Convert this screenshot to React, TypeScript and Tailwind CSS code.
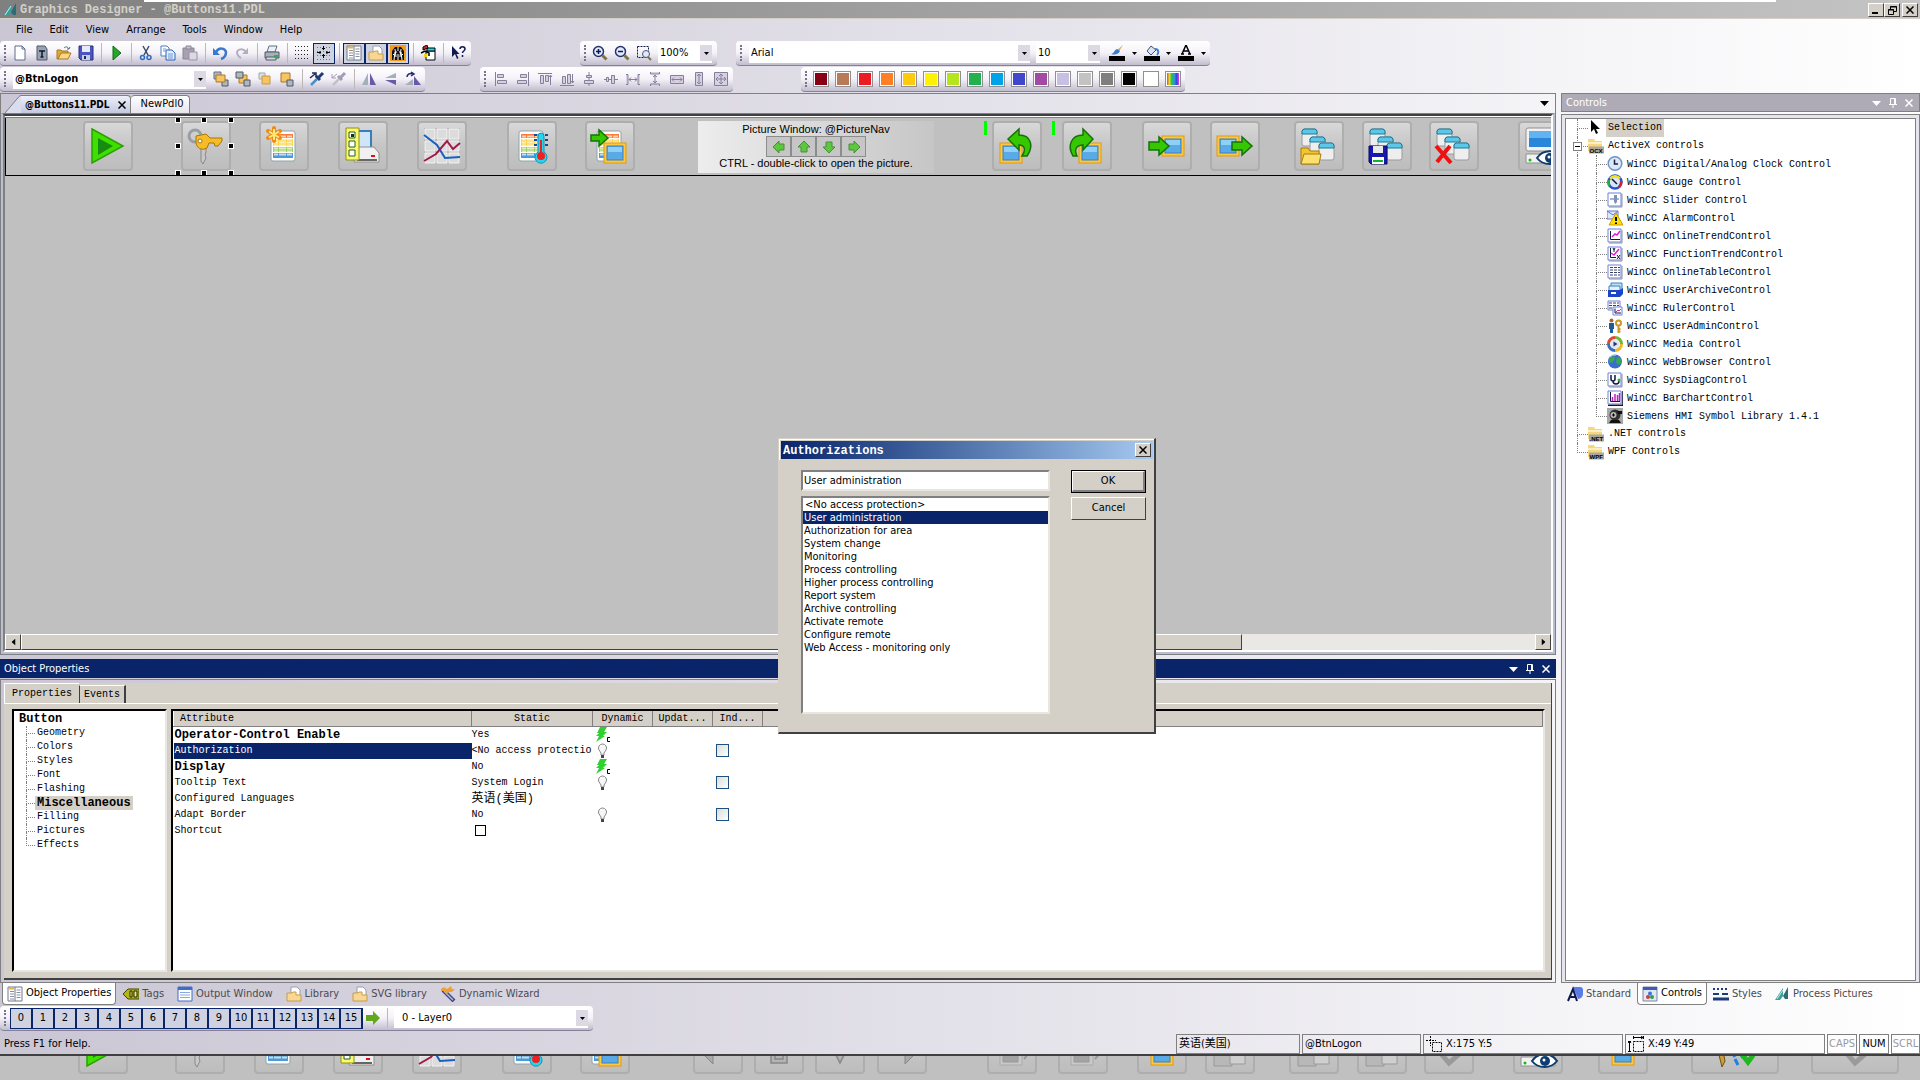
import React from 'react';

const UI = "font-['DejaVu_Sans_Condensed','Noto_Sans','Noto_Sans_CJK_SC',sans-serif]";
const MONO = "font-['Liberation_Mono','Noto_Sans_CJK_SC',monospace]";
const RAISED = 'border border-t-white border-l-white border-r-[#404040] border-b-[#404040] bg-[#d4d0c8]';
const SUNKEN = 'border-2 border-t-[#808080] border-l-[#808080] border-r-[#e8e6e0] border-b-[#e8e6e0] bg-white';

/* ---------- small 16px icons ---------- */

const folder = <path d="M1 4h5l1 2h8v8H1z" fill="#f0c25c" stroke="#b08030" />;
const lens = (
  <>
    <circle cx="6.5" cy="6.5" r="5" fill="#dfe9fb" stroke="#26306a" strokeWidth="1.5" />
    <path d="M10.500 10.500l4 4" stroke="#7c7440" strokeWidth="3" />
  </>
);
const frame = (
  <>
    <path d="M1 1h13v13H1z" fill="#fff" stroke="#6a83d8" />
    <path d="M2 15h13V2" fill="none" stroke="#8a8fa8" />
  </>
);
const docFolder = (
  <>
    <path d="M5 1h6l3 3v7H5z" fill="#fff" stroke="#9aa0b0" />
    <path d="M1 7h5l1-1h3v3h5v6H1z" fill="#f8d792" stroke="#c79c4c" />
  </>
);
const listDoc = (
  <>
    <path d="M1 1h14v14H1z" fill="#fff" stroke="#707890" />
    <path d="M2 2.500h5" stroke="#f0b030" strokeWidth="2" />
    <path d="M3 5.500h4M3 8h4M3 10.500h4M3 13h4M9.500 4h4M9.500 6.500h4M9.500 9h4M9.500 11.500h4" stroke="#8a8f9c" />
    <path d="M8 1v14" stroke="#707890" />
  </>
);
const logo = (
  <>
    <path d="M1 14L9 2v8l-3 4z" fill="#3e9c9a" />
    <path d="M9 10l5-9v12h-3z" fill="#2b6c78" />
    <path d="M3 13L9 4" stroke="#c8f0ee" />
  </>
);
const typeFolder = (label: string) => (
  <>
    <path d="M0 1h6l1 2h7v10H0z" fill="#f6d67e" />
    <path d="M0 4h14v2H0z" fill="#fdf0c0" />
    <path d="M1 8.500h15v7H1z" fill="#a8a8a0" />
    <text x="1.500" y="14.500" fontSize="6" fontWeight="700" fontFamily="Liberation Sans, sans-serif">{label}</text>
  </>
);

const ICONS: Record<string, React.ReactNode> = {
  logo,
  folder,
  docFolder,
  listDoc,
  newDoc: <path d="M3 1h7l3 3v11H3zM10 1v3h3" fill="#fff" stroke="#5c6c8c" />,
  newT: (
    <>
      <path d="M3 1h8l2 3v11H3z" fill="#9aa2b4" stroke="#4c5870" />
      <path d="M5 6h6M8 6v6M6.500 12h3" stroke="#10182c" strokeWidth="1.500" />
    </>
  ),
  open: (
    <>
      <path d="M1 5h4l1 1h6v3H5l-3 5H1z" fill="#e0a83c" stroke="#a87820" />
      <path d="M5 8h10l-3 6H2z" fill="#fad888" stroke="#a87820" />
      <path d="M8 3c2-2 4-1 5 1l1-2M13 4l-2 0" fill="none" stroke="#4a6a8a" />
    </>
  ),
  save: (
    <>
      <path d="M1 1h14v14H3l-2-2z" fill="#4a55c0" stroke="#283080" />
      <path d="M4 1h8v6H4z" fill="#e6ebfa" />
      <path d="M4 10h8v5H4z" fill="#c8cede" />
      <path d="M6 11h2v3H6z" fill="#20286a" />
    </>
  ),
  play: <path d="M5 1l8 7-8 7z" fill="#28a428" stroke="#0e6c14" />,
  cut: (
    <>
      <path d="M5 1l5 9M11 1L6 10" stroke="#3c4a68" strokeWidth="1.500" />
      <circle cx="4.500" cy="12.500" r="2" fill="none" stroke="#2e6cc4" strokeWidth="1.500" />
      <circle cx="11" cy="12.500" r="2" fill="none" stroke="#2e6cc4" strokeWidth="1.500" />
    </>
  ),
  copy: (
    <>
      <path d="M1 1h6l2 2v8H1z" fill="#fff" stroke="#4c7cc4" />
      <path d="M6 5h6l3 3v7H6z" fill="#e4eefc" stroke="#2e62b4" />
      <path d="M3 4h3M3 6h3M8 9h5M8 11h5M8 13h5" stroke="#6c98d8" />
    </>
  ),
  paste: (
    <>
      <path d="M1 3h11v11H1z" fill="#a8a0b0" stroke="#8c8498" />
      <path d="M4 1h5v3H4z" fill="#c8c2d0" stroke="#8c8498" />
      <path d="M7 7h8v8H7z" fill="#dcd8e4" stroke="#9890a4" />
    </>
  ),
  undo: (
    <>
      <path d="M1 3v7h7z" fill="#3a78d0" />
      <path d="M4 7c3-5 9-4 10 0 0 3-2 6-5 7" fill="none" stroke="#3a78d0" strokeWidth="2.500" />
    </>
  ),
  redo: (
    <>
      <path d="M14 3v6H8z" fill="#b4aec0" />
      <path d="M12 7c-3-4-8-3-9 0 0 3 2 5 4 6" fill="none" stroke="#b4aec0" strokeWidth="2" />
    </>
  ),
  print: (
    <>
      <path d="M5 1h8l-2 6H3z" fill="#e8f0fa" stroke="#607080" />
      <path d="M1 7h14v6H1z" fill="#a8b0bc" stroke="#505868" />
      <path d="M2 12h10v3H2z" fill="#d4d8e0" stroke="#505868" />
      <path d="M10 10h4v3h-4z" fill="#30b040" />
    </>
  ),
  grid: <path d="M1 1.500h15M1 5.500h15M1 9.500h15M1 13.500h15" stroke="#222" strokeDasharray="1 2" />,
  snap: (
    <>
      <path d="M1 2.500h15M1 6.500h15M1 10.500h15M1 14.500h15" stroke="#777" strokeDasharray="1 2" />
      <path d="M7.500 1v4M7.500 9v4M1 7.500h4M10 7.500h4M6 3.500h3M6 10.500h3M4 6v3M11 6v3" stroke="#000" />
    </>
  ),
  lib: (
    <>
      <path d="M0 0h16v16H0z" fill="#f49a1c" />
      <path d="M2 15V6l3-4h6l3 4v9z" fill="#111" />
      <path d="M4 15l1-8M6 12L5 4M8 15V9M8 6V2M10 12l1-8M12 15l-1-8M3 9l2 2M13 9l-2 2M6 7h1M9 7h1" stroke="#fff" />
    </>
  ),
  wizardBox: (
    <>
      <path d="M6 6h9v9H6z" fill="#fff" stroke="#000" />
      <path d="M7 3h8v3H7z" fill="#18d8e8" stroke="#000" />
      <path d="M3 2l4-2 1 3-5 2z" fill="#e02020" stroke="#000" />
      <path d="M1 8l4-2 4 2v3" stroke="#000" strokeWidth="1.500" fill="none" />
      <path d="M4 9h4l-1 3H4z" fill="#f0d020" />
    </>
  ),
  help: (
    <>
      <path d="M2 1v11l3-3 2 5 1.500-1-2-4h3z" fill="#101a50" />
      <path d="M10 4c0-3 5-3 5 0 0 2-2.500 2-2.500 4M12.500 10v2" stroke="#101a50" strokeWidth="1.500" fill="none" />
    </>
  ),
  front: (
    <>
      <path d="M1 1h7v7H1z" fill="#aeb8c0" stroke="#68707c" />
      <path d="M9 9h6v6H9z" fill="#aeb8c0" stroke="#505864" />
      <path d="M3 4h9v7H3z" fill="#f6c460" stroke="#a87828" />
    </>
  ),
  back: (
    <>
      <path d="M4 4h8v8H4z" fill="#f6c460" stroke="#a87828" />
      <path d="M1 1h7v6H1z" fill="#aeb8c0" stroke="#505864" />
      <path d="M9 9h6v6H9z" fill="#aeb8c0" stroke="#505864" />
    </>
  ),
  forward: (
    <>
      <path d="M2 2h6v6H2z" fill="#dce0e4" stroke="#a0a6b0" />
      <path d="M5 5h8v8H5z" fill="#f6c460" stroke="#c89848" />
    </>
  ),
  backward: (
    <>
      <path d="M2 2h9v9H2z" fill="#f6c460" stroke="#a87828" />
      <path d="M8 9h6v6H8z" fill="#aeb8c0" stroke="#505864" />
    </>
  ),
  dropper: (
    <>
      <path d="M8 8l-6 6" stroke="#4a90c8" strokeWidth="2.500" />
      <path d="M7 5l4 4M9 7l5-5" stroke="#1c3c78" strokeWidth="3" />
      <path d="M1 7l5-4M3 2h4v4" stroke="#202858" strokeWidth="1.500" fill="none" />
    </>
  ),
  dropperOff: (
    <>
      <path d="M8 8l-6 6" stroke="#c4c0d0" strokeWidth="2.500" />
      <path d="M7 5l4 4M9 7l5-5" stroke="#a49cb4" strokeWidth="3" />
      <path d="M1 3v4h4M1 7l5-4" stroke="#a49cb4" fill="none" />
    </>
  ),
  flipH: (
    <>
      <path d="M7 2v12H1z" fill="#a4b0b8" />
      <path d="M9 2v12h6z" fill="#6a58a8" />
    </>
  ),
  flipV: (
    <>
      <path d="M13 7V2L2 7z" fill="#a4b0b8" />
      <path d="M13 9v5L2 9z" fill="#6a58a8" />
    </>
  ),
  rotate: (
    <>
      <path d="M8 8v6H0z" fill="#a4b0b8" />
      <path d="M9 5v9h7z" fill="#6a58a8" />
      <path d="M2 6c0-3 3-4 6-3M6 1l3 2-3 2" fill="none" stroke="#202c70" strokeWidth="1.500" />
    </>
  ),
  zoomIn: <>{lens}<path d="M4 6.500h5M6.500 4v5" stroke="#10184c" strokeWidth="1.500" /></>,
  zoomOut: <>{lens}<path d="M4 6.500h5" stroke="#10184c" strokeWidth="1.500" /></>,
  zoomArea: (
    <>
      <path d="M1.500 1.500h11v11h-11z" fill="none" stroke="#10184c" strokeDasharray="2 1" />
      <circle cx="10" cy="9" r="3.500" fill="#dfe9fb" stroke="#50587a" />
      <path d="M12 12l3 3" stroke="#7c7440" strokeWidth="2" />
    </>
  ),
  pen: (
    <>
      <path d="M14 0L7 6l2 2z" fill="#e8a840" />
      <path d="M8 4l3 2c-2 4-6 4-9 3 3 0 3-4 6-5z" fill="#3a7cd0" />
      <path d="M0 11h16v5H0z" />
    </>
  ),
  fill: (
    <>
      <path d="M7 1l5 4-5 5-4-4z" fill="#dce4f0" stroke="#3c5478" />
      <path d="M11 4c4 0 4 4 2 6" stroke="#3a7cd0" strokeWidth="2" fill="none" />
      <path d="M0 11h16v5H0z" />
    </>
  ),
  fontColor: (
    <>
      <path d="M4 9l4-9 4 9M5.500 6h5M3 9h3M10 9h3" stroke="#000" strokeWidth="1.500" fill="none" />
      <path d="M0 11h16v5H0z" />
    </>
  ),
  alLeft: <path d="M2.500 1v14M4.500 3.500h6v3h-6zM4.500 9.500h9v3h-9z" />,
  alRight: <path d="M13.500 1v14M5.500 3.500h6v3h-6zM2.500 9.500h9v3h-9z" />,
  alTop: <path d="M1 2.500h14M3.500 4.500h3v8h-3zM8.500 4.500h3v6h-3zM13.500 5v9M12 6l1.500-2L15 6" />,
  alBottom: <path d="M1 14.500h14M3.500 5.500h3v7h-3zM8.500 3.500h3v9h-3zM13.500 3v9M12 10l1.500 2 1.500-2" />,
  alCenterH: <path d="M8 1v3M5.500 4.500h5v2h-5zM8 7v3M3.500 9.500h9v3h-9zM8 13v2" />,
  alCenterV: <path d="M1 8.500h2M3.500 6.500h2v4h-2zM6 8.500h2M8.500 4.500h3v8h-3zM12 8.500h3" />,
  spaceH: <path d="M1 3.500h2v10H1M15 3.500h-2v10h2M4 8.500h8M6 6.500l-2 2 2 2M10 6.500l2 2-2 2" />,
  spaceV: <path d="M3.500 1v2h9V1M3.500 15v-2h9v2M8 4v8M6 6l2-2 2 2M6 10l2 2 2-2" />,
  sameW: <path d="M1.500 4.500h13v8h-13zM3 8.500h10M5 6.500l-2 2 2 2M11 6.500l2 2-2 2" />,
  sameH: <path d="M4.500 1.500h7v13h-7zM8 3v10M6 5l2-2 2 2M6 11l2 2 2-2" />,
  sameWH: <path d="M1.500 1.500h13v13h-13zM8 3v10M3 8h10M6 5l2-2 2 2M6 11l2 2 2-2M5 6L3 8l2 2M11 6l2 2-2 2" />,
  arrowGo: <path d="M1 5h7V1l7 7-7 7v-4H1z" fill="#62a81c" />,
  tags: (
    <>
      <path d="M0 8l5-5h11v10H5z" fill="#b4b814" stroke="#404400" />
      <path d="M7 5h2v6H7zM11 5h3v6h-3z" fill="#f0f080" stroke="#202000" />
    </>
  ),
  output: (
    <>
      <path d="M1 1h14v14H1z" fill="#fff" stroke="#3e6cc8" />
      <path d="M1 2.500h14" stroke="#3e6cc8" strokeWidth="3" />
      <path d="M3 6.500h10M3 9h10M3 11.500h10" stroke="#8aa8e0" />
    </>
  ),
  wand: (
    <>
      <path d="M3 4l11 11" stroke="#404a80" strokeWidth="4" />
      <path d="M4 5l9 9" stroke="#aeb6e0" strokeWidth="1.500" />
      <path d="M1 3l3-2 3 2 4-3 1 3 3 0-3 3-3 0-3 2-1-3-4 0z" fill="#f0a030" />
    </>
  ),
  std: (
    <>
      <path d="M6 1h7a3 3 0 013 3v4a5 5 0 01-5 5z" fill="#5a7ce8" />
      <path d="M1 15l5-12 4 12M3 11h6" stroke="#10184c" strokeWidth="2" fill="none" />
    </>
  ),
  ctrlTab: (
    <>
      <path d="M1 1h14v14H1z" fill="#e0e6f2" stroke="#7888a8" />
      <path d="M1 2.500h14" stroke="#3c5cb8" strokeWidth="3" />
      <circle cx="8" cy="7.500" r="2" fill="#4070e0" />
      <circle cx="6" cy="11" r="2" fill="#d03a3a" />
      <circle cx="10" cy="11" r="2" fill="#30a040" />
    </>
  ),
  styles: (
    <>
      <path d="M0 3h16" stroke="#1c3c78" strokeWidth="2" strokeDasharray="2 2" />
      <path d="M0 8h16" stroke="#1c3c78" strokeWidth="2" strokeDasharray="6 3" />
      <path d="M0 13h16" stroke="#1c3c78" strokeWidth="3" />
    </>
  ),
  pos: <path d="M4.500 0v10M0 4.500h10M6.500 6.500h9v9h-9z" fill="none" stroke="#000" strokeDasharray="2 1" />,
  size: (
    <>
      <path d="M5.500 5.500h10v10h-10z" fill="none" stroke="#000" strokeDasharray="2 1" />
      <path d="M5 1.500h10M1.500 5v10M0 15.500h3M0 5.500h3M5.500 0v3M15.500 0v3M13 0l2 1.500L13 3M0 7l1.500-2L3 7" fill="none" stroke="#000" />
    </>
  ),
  cursor: <path d="M3 0v12l3-3 2 5 2-1-2-4h4z" fill="#000" />,
  ocx: typeFolder('OCX'),
  net: typeFolder('.NET'),
  wpf: typeFolder('WPF'),
  clock: (
    <>
      <circle cx="8" cy="7.500" r="6.800" fill="#dce8f8" stroke="#6f94c8" strokeWidth="1.500" />
      <path d="M7.500 3.500V8H11" fill="none" stroke="#16233c" strokeWidth="1.500" />
    </>
  ),
  gauge: (
    <>
      <circle cx="8" cy="8" r="6.500" fill="#d8e4fa" stroke="#2c50d0" strokeWidth="2.500" />
      <path d="M2.500 12A6.500 6.500 0 012 6" stroke="#20b040" strokeWidth="2.500" fill="none" />
      <path d="M3 4.500a6.500 6.500 0 0110 0" stroke="#f0e020" strokeWidth="2.500" fill="none" />
      <path d="M14 7a6.500 6.500 0 01-2 6" stroke="#e02020" strokeWidth="2.500" fill="none" />
      <path d="M5 5l5 5" stroke="#101840" strokeWidth="1.500" />
    </>
  ),
  slider: <>{frame}<path d="M3 6h9v2H3z" fill="#a0b4e0" /><path d="M7 3h3v7l-1.500 2L7 10z" fill="#8090b8" /></>,
  alarm: (
    <>
      <path d="M0 1h11v8H0z" fill="#dfe7fb" stroke="#5c78d0" />
      <path d="M0 1l6 4 5-4" fill="none" stroke="#5c78d0" />
      <path d="M9 3l7 12H2z" fill="#ffe000" stroke="#c8a000" />
      <path d="M9 7v4M9 12.500v1.500" stroke="#000" strokeWidth="2" />
    </>
  ),
  trend: <>{frame}<path d="M3.500 3v8.500H13" stroke="#101840" fill="none" /><path d="M5 9l3-3 2 1 3-4" stroke="#e020d0" strokeWidth="1.500" fill="none" /></>,
  ftrend: <>{frame}<path d="M3.500 2v9.500H9" stroke="#101840" fill="none" /><path d="M4 7l3 2 5-6" stroke="#e020d0" strokeWidth="1.500" fill="none" /><path d="M6 2l1 2 1-2M7 4v2M10 9l3 4M13 9l-3 4" stroke="#101840" fill="none" /></>,
  table: <>{frame}<path d="M3 3.500h10M3 6h10M3 8.500h10M3 11h10" stroke="#39426c" strokeDasharray="3 1" /></>,
  archive: (
    <>
      <path d="M4 1h11v7H4z" fill="#bfe2f6" stroke="#3a80b8" />
      <path d="M2 4h11v5H2z" fill="#dff2fc" stroke="#3a80b8" />
      <path d="M1 8h12l3-2v6l-3 3H1z" fill="#1c44c8" />
      <path d="M4 10h5v2H4z" fill="#fff" />
    </>
  ),
  ruler: (
    <>
      <path d="M1 1h12v9H1z" fill="#fff" stroke="#6a83d8" />
      <path d="M2 3h10M2 5.500h10M2 8h10" stroke="#39426c" strokeDasharray="3 1" />
      <path d="M6 7h9v8H6z" fill="#fff" stroke="#6a83d8" />
      <path d="M8 8.500V13h6" stroke="#101840" fill="none" />
      <path d="M9 12l2-2 1 1 2-2" stroke="#e020d0" fill="none" />
    </>
  ),
  userAdmin: (
    <>
      <circle cx="4.500" cy="2.500" r="2" fill="#a86838" />
      <path d="M2 5h5v6H6v4H3v-4H2z" fill="#1c5c9c" />
      <circle cx="11.500" cy="5" r="2.500" fill="none" stroke="#c89828" strokeWidth="2" />
      <path d="M11.500 7v8M11.500 11h2M11.500 13.500h2" stroke="#c89828" strokeWidth="2" />
    </>
  ),
  media: (
    <>
      <path d="M8 1.500A6.500 6.500 0 001.500 8" stroke="#e04830" strokeWidth="3" fill="none" />
      <path d="M8 1.500A6.500 6.500 0 0114.500 8" stroke="#70b838" strokeWidth="3" fill="none" />
      <path d="M14.500 8A6.500 6.500 0 018 14.500" stroke="#f0b820" strokeWidth="3" fill="none" />
      <path d="M1.500 8A6.500 6.500 0 008 14.500" stroke="#3870c0" strokeWidth="3" fill="none" />
      <circle cx="8" cy="8" r="4.500" fill="#dfe6f4" />
      <path d="M6.500 5.500l4 2.500-4 2.500z" fill="#20386c" />
    </>
  ),
  globe: (
    <>
      <circle cx="8" cy="7.500" r="7" fill="#3c6cd0" />
      <path d="M2 4l5-2 1 3-3 4-3-1zM10 3l4 2v4l-3 2-2-3z" fill="#38a850" />
      <path d="M3 3a7 7 0 016-2" stroke="#c0d8f8" fill="none" />
    </>
  ),
  sysdiag: <>{frame}<path d="M4 3v4a2 2 0 004 0V3M6 9c0 4 6 4 6 0" stroke="#101840" strokeWidth="1.500" fill="none" /><circle cx="12" cy="8" r="1.500" fill="#38a850" /></>,
  bars: (
    <>
      {frame}
      <path d="M3.500 2v9.500H13" stroke="#101840" fill="none" />
      <path d="M5.500 11V7M8 11V4M10.500 11V5M12.500 11V3" stroke="#c020c0" strokeWidth="1.500" />
      <path d="M1 15.500h15V1" stroke="#101840" strokeWidth="1.500" fill="none" />
    </>
  ),
  symbol: (
    <>
      <path d="M0 0h16v16H0z" fill="#a8a8a8" />
      <circle cx="8" cy="7" r="5.500" fill="#303030" />
      <circle cx="6.500" cy="7" r="3" fill="#b8b8b8" />
      <path d="M5 7h3M6.500 5.500v3" stroke="#000" />
      <path d="M10 3h5v3h-4zM2 15l2-3h8l2 3z" fill="#101010" />
    </>
  ),
  bolt: (
    <>
      <path d="M5 0h7L9 5h3L8 9h2L1 15l3-6H1l3-3H2z" fill="#2ed22e" />
      <path d="M15 10.500h-2.500v4H15" fill="none" stroke="#000" />
    </>
  ),
  bulb: (
    <>
      <path d="M7.500 1a4 4 0 00-3.500 6l2 3v2h3v-2l2-3a4 4 0 00-3.500-6z" fill="#f6f6f6" stroke="#888" />
      <path d="M6 12h3v3H6z" fill="#444" />
    </>
  ),
};

const Icon = ({ name, className = 'size-4' }: { name: string; className?: string }) => (
  <svg viewBox="0 0 16 16" className={`shrink-0 ${className}`} aria-hidden="true">{ICONS[name]}</svg>
);

const AlignIcon = ({ name }: { name: string }) => (
  <svg viewBox="0 0 16 16" className="size-4 shrink-0" fill="#d8cfe2" stroke="#85809a" aria-hidden="true">{ICONS[name]}</svg>
);

/* ---------- toolbar pieces ---------- */

const Grip = () => <span className="h-4 w-0.5 shrink-0 border-l-2 border-dotted border-[#77738a]" />;
const Sep = ({ wide }: { wide?: boolean }) => (
  <span className={`h-5 w-px shrink-0 bg-[#bdb8b4] ${wide ? 'mx-1.5' : 'ml-1 mr-[3px]'}`} />
);

const Toolbar = ({ label, className = '', children }: { label: string; className?: string; children: React.ReactNode }) => (
  <div
    role="toolbar"
    aria-label={label}
    className={`flex h-[25px] shrink-0 items-center rounded border-b border-[#85819a] bg-gradient-to-b from-white via-[#f4f2f8] to-[#c2bdce] pl-1 ${className}`}
  >
    {children}
  </div>
);

const Tool = ({ name, on }: { name: string; on?: boolean }) => (
  <button
    aria-label={name}
    className={`flex h-[21px] w-[22px] shrink-0 items-center justify-center ${on ? 'border border-[#0a246a] bg-[#cfd2e0]' : ''}`}
  >
    <Icon name={name} />
  </button>
);

const Combo = ({ label, value, className, bold }: { label: string; value: string; className: string; bold?: boolean }) => (
  <div className={`flex h-5 shrink-0 items-center bg-white ${className}`}>
    <select
      aria-label={label}
      className={`h-full min-w-0 flex-1 appearance-none bg-transparent pl-0.5 outline-none ${bold ? 'font-bold' : ''}`}
    >
      <option>{value}</option>
    </select>
    <span className="flex h-4 w-3 items-center justify-center bg-[#dcd9e4]">
      <Caret />
    </span>
  </div>
);

const Caret = ({ className = 'h-[3px] w-[5px]' }: { className?: string }) => (
  <svg viewBox="0 0 10 6" preserveAspectRatio="none" className={`shrink-0 fill-current ${className}`} aria-hidden="true">
    <path d="M0 0h10L5 6z" />
  </svg>
);
const Cross = ({ className = 'size-2' }: { className?: string }) => (
  <svg viewBox="0 0 8 8" className={`shrink-0 ${className}`} stroke="currentColor" strokeWidth="1.500" aria-hidden="true">
    <path d="M0.500 0.500l7 7M7.500 0.500l-7 7" />
  </svg>
);
const Pin = () => (
  <svg viewBox="0 0 8 10" className="h-2.5 w-2" fill="none" stroke="currentColor" aria-hidden="true">
    <path d="M1.500 6V0.500h5V6M5.500 1v5M0 6.500h8M4 7v3" />
  </svg>
);

const PaneButtons = () => (
  <span className="flex items-center gap-2 text-white">
    <button aria-label="Window position"><Caret className="h-[5px] w-[9px]" /></button>
    <button aria-label="Auto hide"><Pin /></button>
    <button aria-label="Close"><Cross className="size-2" /></button>
  </span>
);

const SWATCHES = ['#880015', '#b97a57', '#ed1c24', '#ff7f27', '#ffc90e', '#fff200', '#b5e61d', '#22b14c', '#00a2e8', '#3f48cc', '#a349a4', '#c8bfe7', '#c3c3c3', '#7f7f7f', '#000000', '#ffffff'];

const ALIGN = ['alLeft', 'alRight', 'alTop', 'alBottom', 'alCenterH', 'alCenterV', 'spaceH', 'spaceV', 'sameW', 'sameH', 'sameWH'];

/* ---------- drawings on the picture's buttons (40 x 40) ---------- */

const sheet = (
  <>
    <rect x="7" y="5" width="24" height="30" rx="2" fill="#fff" stroke="#8fa4a8" />
    <path d="M9 8h20v4H9z" fill="#ff7a3a" />
    <path d="M9 13h20v7H9z" fill="#ffd44a" />
    <path d="M9 21h20v5H9z" fill="#9ad06a" />
    <path d="M9 27h20v5H9z" fill="#4a9ade" />
    <path d="M10 9.500h4v2h-4zM10 12.500h4v2h-4zM10 15.500h4v2h-4zM10 18.500h4v2h-4zM10 21.500h4v2h-4zM10 24.500h4v2h-4zM10 27.500h4v2h-4zM15 9.500h7v2h-7zM15 12.500h7v2h-7zM15 15.500h7v2h-7zM15 18.500h7v2h-7zM15 21.500h7v2h-7zM15 24.500h7v2h-7zM15 27.500h7v2h-7zM23 9.500h5v2h-5zM23 12.500h5v2h-5zM23 15.500h5v2h-5zM23 18.500h5v2h-5zM23 21.500h5v2h-5zM23 24.500h5v2h-5zM23 27.500h5v2h-5z" fill="#fffbe0" fillOpacity="0.700" />
  </>
);
const tile = (x: number, y: number) => (
  <>
    <rect x={x} y={y} width="22" height="20" fill="#ffc83c" stroke="#e09a10" />
    <rect x={x + 3} y={y + 3} width="16" height="14" fill="#5aaae8" stroke="#3a80c0" />
    <path d={`M${x + 4} ${y + 4}h14v5h-14z`} fill="#8fd0f8" />
  </>
);
const green = { fill: '#35c800', stroke: '#17700a', strokeWidth: 1.5 };
const win = (x: number, y: number) => (
  <>
    <rect x={x} y={y} width="15" height="17" rx="2" fill="#eeeeee" stroke="#9a9a9a" />
    <path d={`M${x} ${y + 5}v-3l2-2h11l2 2v3z`} fill="#5cc8e8" stroke="#1c7898" />
  </>
);
const windows = <>{win(3, 3)}{win(11, 11)}{win(20, 17)}</>;

const ART: Record<string, React.ReactNode> = {
  start: (
    <>
      <path d="M4 3l31 17L4 37z" fill="#3fe000" stroke="#2aa000" strokeWidth="1.500" />
      <path d="M10 12l15 8-15 9z" fill="#168c10" />
    </>
  ),
  key: (
    <>
      <path d="M16 22l4 0v4l-1 3 1 3-3 6-2-3V22z" fill="#c8c8c8" stroke="#888" />
      <circle cx="9" cy="10" r="6" fill="none" stroke="#9a9ea4" strokeWidth="3" />
      <path d="M10 10l10-2 4 4h12v3l-4 5h-3l-1-3h-5l-2 5c-6 3-10 0-11-5z" fill="#f6bc28" stroke="#a87408" />
      <circle cx="14" cy="15" r="2" fill="#fff" stroke="#a87408" />
    </>
  ),
  alarmSheet: (
    <>
      {sheet}
      <path d="M10 2v13M4 5l12 7M16 5L4 12" stroke="#f08a10" strokeWidth="4" strokeLinecap="round" />
      <path d="M10 3v11M5 5.500l10 6M15 5.500l-10 6" stroke="#ffe880" strokeWidth="2" />
    </>
  ),
  report: (
    <>
      <path d="M14 5h14v18H14z" fill="#cfe6fa" stroke="#3a7cc0" strokeWidth="2" />
      <path d="M13 21h18l5 6v9H11z" fill="#f0f0f0" stroke="#909090" />
      <path d="M14 34h20" stroke="#666" strokeWidth="2" />
      <path d="M28 29h4v2h-4z" fill="#e01010" />
      <path d="M3 2h13v32H3z" fill="#fafa70" stroke="#909010" />
      <path d="M6 6h6v6H6zM6 15h6v6H6zM6 24h6v6H6z" fill="#fff" stroke="#206020" />
      <path d="M8 8h3v3H8z" fill="#183018" />
    </>
  ),
  trends: (
    <>
      <path d="M2 2h36v36H2z" fill="#bbb" />
      <path d="M3 3h10v10H3zM15 3h10v10H15zM27 3h10v10H27zM3 15h10v10H3zM15 15h10v10H15zM27 15h10v10H27zM3 27h10v10H3zM15 27h10v10H15zM27 27h10v10H27z" fill="#dcdcdc" stroke="#f4f4f4" />
      <path d="M2 9l13 10 8 13 15-1" fill="none" stroke="#1860c0" strokeWidth="2" />
      <path d="M2 35l12-7 11-13 6 8 7-6" fill="none" stroke="#a01848" strokeWidth="2" />
    </>
  ),
  temp: (
    <>
      {sheet}
      <path d="M26 10a3 3 0 016 0v16a6 6 0 11-6 0z" fill="#20d8f0" stroke="#1890b0" />
      <path d="M29 14v15" stroke="#f02020" strokeWidth="2" />
      <circle cx="29" cy="30" r="4" fill="#f02020" />
      <path d="M22 9h3M22 14h3M22 19h3M33 9h3M33 14h3M33 19h3" stroke="#124a9a" strokeWidth="2" />
    </>
  ),
  sheetTo: <>{sheet}{tile(14, 17)}<path d="M1 9h8V4l9 8-9 8v-5H1z" {...green} /></>,
  undoPic: <>{tile(3, 17)}<path d="M11 13L22 3v6c12 0 15 11 8 21h-5c4-6 3-11-3-11v5z" {...green} /></>,
  redoPic: <>{tile(12, 17)}<path d="M26 13L16 3v6C4 9 0 20 6 30h4c-3-6-1-11 6-11v5z" {...green} /></>,
  intoPic: <>{tile(15, 10)}<path d="M2 16h10v-5l10 9-10 9v-5H2z" {...green} /></>,
  outPic: <>{tile(2, 10)}<path d="M17 16h10v-5l10 9-10 9v-5H17z" {...green} /></>,
  winOpen: <>{windows}<path d="M2 22h7l2 3h9v13H2z" fill="#f2c430" stroke="#a87c10" /><path d="M2 38l3-10h17l-2 10z" fill="#fce070" stroke="#a87c10" /></>,
  winSave: <>{windows}<path d="M2 20h18v18H4l-2-2z" fill="#1818b0" stroke="#080868" /><path d="M6 20h10v7H6z" fill="#e8e8e8" /><path d="M5 31h12v7H5z" fill="#fff" /><path d="M6 35h10" stroke="#10b030" strokeWidth="2" /></>,
  winDel: <>{windows}<path d="M2 20l15 17M16 20L3 36" stroke="#f01010" strokeWidth="4" /></>,
  pcEye: (
    <>
      <rect x="3" y="2" width="31" height="23" rx="2" fill="#f2f2f2" stroke="#909090" />
      <path d="M6 5h25v16H6z" fill="#2a86d8" />
      <path d="M6 5h25v7H6z" fill="#62b4f0" />
      <path d="M3 28h34v9H3z" fill="#f2f2f2" stroke="#909090" />
      <circle cx="7" cy="34" r="1.500" fill="#10c010" />
      <path d="M14 32c6-9 19-9 25 0-6 8-19 8-25 0z" fill="#fff" stroke="#0e3c70" strokeWidth="2" />
      <circle cx="27" cy="32" r="5" fill="#0e3c70" />
      <circle cx="26" cy="31" r="1.500" fill="#fff" />
    </>
  ),
  tileOnly: tile(9, 16),
  grayLeft: <path d="M4 24l11-11v7h16v6H15v9z" fill="#aaa" stroke="#888" />,
  grayRight: <path d="M34 24L23 13v7H7v6h16v9z" fill="#aaa" stroke="#888" />,
  grayStop: <path d="M12 18h16v16H12zM16 20h8v10h-8z" fill="#b4b4b4" stroke="#888" strokeWidth="1.500" />,
  grayDown: <path d="M13 20h14l-7 14z" fill="#b4b4b4" stroke="#888" strokeWidth="1.500" />,
  grayTile: <><path d="M8 14h22v22H8z" fill="#c8c8c8" stroke="#aaa" /><path d="M11 18h15v15H11z" fill="#a4a4a4" stroke="#999" /><path d="M32 30l5-6" stroke="#999" strokeWidth="2" /></>,
  grayWin: <><path d="M4 22h18v15H4z" fill="#b8b8b8" stroke="#999" /><path d="M20 16h15v19H20z" fill="#cfcfcf" stroke="#999" /></>,
  check: <><path d="M2 20l6 2 2 10-3 6-3-12z" fill="#c8a040" stroke="#705010" /><path d="M16 22l4 6M20 30l3 6M25 24l3 5" stroke="#2080e0" strokeWidth="3" /><path d="M26 24l7 9 8-11" fill="none" stroke="#20b820" strokeWidth="5" /></>,
  grayCheck: <path d="M8 20l12 14 16-14" fill="none" stroke="#9a9a9a" strokeWidth="5" />,
};

const TOP_OBJECTS = [
  { art: 'start', x: 77 }, { art: 'key', x: 175 }, { art: 'alarmSheet', x: 253 }, { art: 'report', x: 332 },
  { art: 'trends', x: 411 }, { art: 'temp', x: 501 }, { art: 'sheetTo', x: 579 }, { art: 'undoPic', x: 986 },
  { art: 'redoPic', x: 1056 }, { art: 'intoPic', x: 1136 }, { art: 'outPic', x: 1204 }, { art: 'winOpen', x: 1288 },
  { art: 'winSave', x: 1356 }, { art: 'winDel', x: 1423 }, { art: 'pcEye', x: 1512 },
];

const BOTTOM_OBJECTS = [
  { art: 'start', x: 78 }, { art: 'key', x: 175 }, { art: 'alarmSheet', x: 254 }, { art: 'report', x: 333 },
  { art: 'trends', x: 412 }, { art: 'temp', x: 502 }, { art: 'sheetTo', x: 580 }, { art: 'grayLeft', x: 693 },
  { art: 'grayStop', x: 754 }, { art: 'grayDown', x: 815 }, { art: 'grayRight', x: 877 }, { art: 'grayTile', x: 987 },
  { art: 'grayTile', x: 1058 }, { art: 'tileOnly', x: 1137 }, { art: 'grayWin', x: 1205 }, { art: 'grayWin', x: 1289 },
  { art: 'grayWin', x: 1357 }, { art: 'grayCheck', x: 1424 }, { art: 'pcEye', x: 1513 }, { art: 'tileOnly', x: 1598 },
  { art: 'check', x: 1691, wide: true }, { art: 'grayCheck', x: 1811, wide: true },
];

const CanvasButton = ({ art, x, wide }: { art: string; x: number; wide?: boolean }) => (
  <button
    aria-label={art}
    className={`absolute top-[3px] flex h-[50px] items-center justify-center rounded-sm border-2 border-[#aeaeae] bg-gradient-to-b from-[#d8d8d8] via-[#c6c6c6] to-[#bdbdbd] ${wide ? 'w-[88px]' : 'w-[50px]'}`}
    style={{ left: x }}
  >
    <svg viewBox="0 0 40 40" className="size-10" aria-hidden="true">{ART[art]}</svg>
  </button>
);

const HANDLES = [[169, -1], [195, -1], [222, -1], [169, 25], [222, 25], [169, 52], [195, 52], [222, 52]];

const NavArrow = ({ turn }: { turn: string }) => (
  <span className="flex h-[21px] w-[25px] items-center justify-center border border-[#8c8c8c] bg-[#c6c6c6]">
    <svg viewBox="0 0 14 14" className={`size-3.5 ${turn}`} aria-hidden="true">
      <path d="M1 7l6-6v3h5v6H7v3z" fill="#5cc840" stroke="#4c8c38" />
    </svg>
  </span>
);

/* ---------- document window ---------- */

const DocumentPane = () => (
  <section className="flex min-h-0 flex-1 flex-col border border-[#808080]">
    <div className="flex h-[19px] shrink-0 items-end justify-between pl-1 pr-1.5" role="tablist">
      <div className="flex items-end">
        <svg viewBox="0 0 16 18" className="h-[18px] w-4 shrink-0" aria-hidden="true">
          <path d="M0 18L14 1.500Q15 0.500 16 0.500V18z" fill="#d9ddee" />
          <path d="M0 18L14 1.500Q15 0.500 16 0.500" fill="none" stroke="#808080" />
        </svg>
        <div className="flex h-[18px] items-center rounded-tr border border-b-0 border-l-0 border-[#808080] bg-gradient-to-b from-[#eef0fa] to-[#c3c9e0] pl-1 pr-1">
          <button role="tab" aria-selected="true" className="text-[10px] font-bold">@Buttons11.PDL</button>
          <button aria-label="Close tab" className="ml-2"><Cross /></button>
        </div>
        <button role="tab" aria-selected="false" className="h-[18px] rounded-t border border-b-0 border-l-0 border-[#808080] bg-gradient-to-b from-white to-[#e8e4ee] pl-2.5 pr-1.5">
          NewPdl0
        </button>
      </div>
      <button aria-label="Open documents" className="self-center"><Caret className="h-[5px] w-[9px]" /></button>
    </div>
    <div className="flex min-h-0 flex-1 flex-col border-2 border-t border-[#b9bed2] border-t-[#808080]">
      <div className="flex min-h-0 flex-1 flex-col border-2 border-b-white border-l-[#808080] border-r-white border-t-[#404040] bg-[#c0c0c0]">
        <div className="h-0.5 shrink-0 border-b border-[#808080] bg-white" />
        <div className="relative h-[58px] shrink-0 overflow-hidden border-b border-l border-black">
          {TOP_OBJECTS.map((o) => <CanvasButton key={o.art} {...o} />)}
          {HANDLES.map(([x, y]) => (
            <span key={`${x}-${y}`} className="absolute size-1.5 border border-white bg-black" style={{ left: x, top: y }} />
          ))}
          <span className="absolute left-[978px] top-[3px] h-3.5 w-[3px] bg-[#00ff00]" />
          <span className="absolute left-[1046px] top-[3px] h-3.5 w-[3px] bg-[#00ff00]" />
          <div className="absolute left-[692px] top-[3px] flex h-[52px] w-[236px] flex-col items-center bg-gradient-to-r from-[#ededed] to-[#c6c6c6] pt-0.5 font-['Liberation_Sans',sans-serif] text-[11px] leading-[13px]">
            <span>Picture Window: @PictureNav</span>
            <div className="flex">
              <NavArrow turn="" />
              <NavArrow turn="rotate-90" />
              <NavArrow turn="-rotate-90" />
              <NavArrow turn="rotate-180" />
            </div>
            <span>CTRL - double-click to open the picture.</span>
          </div>
        </div>
        <div className="flex-1" />
        <div className="flex h-4 shrink-0 bg-[#eae8e4]" role="scrollbar" aria-controls="canvas" aria-valuenow={0} aria-orientation="horizontal">
          <button aria-label="Scroll left" className={`flex w-4 items-center justify-center ${RAISED}`}>
            <Caret className="h-1 w-[7px] rotate-90" />
          </button>
          <span className={`w-[79%] ${RAISED}`} />
          <span className="flex-1" />
          <button aria-label="Scroll right" className={`flex w-4 items-center justify-center ${RAISED}`}>
            <Caret className="h-1 w-[7px] -rotate-90" />
          </button>
        </div>
      </div>
    </div>
  </section>
);

/* ---------- object properties ---------- */

const Branch = ({ last, className }: { last?: boolean; className: string }) => (
  <span className={`flex shrink-0 flex-col self-stretch ${className}`}>
    <span className="flex-1 border-b border-l border-dotted border-[#808080]" />
    <span className={`flex-1 ${last ? '' : 'border-l border-dotted border-[#808080]'}`} />
  </span>
);

const GROUPS = ['Geometry', 'Colors', 'Styles', 'Font', 'Flashing', 'Miscellaneous', 'Filling', 'Pictures', 'Effects'];

const ATTRIBUTES = [
  { name: 'Operator-Control Enable', value: 'Yes', icon: 'bolt', bold: true },
  { name: 'Authorization', value: '<No access protectio', icon: 'bulb', check: true, selected: true },
  { name: 'Display', value: 'No', icon: 'bolt', bold: true },
  { name: 'Tooltip Text', value: 'System Login', icon: 'bulb', check: true },
  { name: 'Configured Languages', value: '英语(美国)', cjk: true },
  { name: 'Adapt Border', value: 'No', icon: 'bulb', check: true },
  { name: 'Shortcut', value: '' },
];

const HEADERS = [
  { label: 'Attribute', className: 'w-[298px] pl-1.5 text-left' },
  { label: 'Static', className: 'w-[121px] text-center' },
  { label: 'Dynamic', className: 'w-[60px] text-center' },
  { label: 'Updat...', className: 'w-[60px] text-center' },
  { label: 'Ind...', className: 'w-[50px] text-center' },
  { label: '', className: '' },
];

const PropertiesPane = () => (
  <section className="mt-1 flex h-[324px] shrink-0 flex-col">
    <header className="flex h-[19px] shrink-0 items-center justify-between bg-[#0a246a] pl-1 pr-1.5 pt-px text-white">
      <h2>Object Properties</h2>
      <PaneButtons />
    </header>
    <div className="mt-px flex min-h-0 flex-1 flex-col border border-[#808080] px-[3px] pb-0.5 pt-[3px]">
      <div className={`flex min-h-0 flex-1 flex-col border-b-2 border-r border-[#404040] bg-[#d4d0c8] ${MONO} text-[10px]`}>
        <div className="flex h-[21px] shrink-0 items-end border-b border-white" role="tablist">
          <button role="tab" aria-selected="true" className="h-5 border-l border-t border-white px-[7px]">Properties</button>
          <button role="tab" aria-selected="false" className="h-[18px] border-l border-r-2 border-t border-l-[#404040] border-r-[#404040] border-t-white px-1">Events</button>
        </div>
        <div className="flex min-h-0 flex-1 gap-1 pb-1.5 pl-2 pr-1.5 pt-[5px]">
          <ul role="tree" aria-label="Property groups" className={`w-[155px] shrink-0 pl-1 pt-px ${SUNKEN} border-l-black border-t-black`}>
            <li role="treeitem" className="h-3.5 pl-px text-[12px] font-bold leading-[14px]">Button</li>
            {GROUPS.map((g, i) => (
              <li key={g} role="treeitem" className="flex h-3.5 items-center pl-2">
                <Branch last={i === GROUPS.length - 1} className="w-[9px]" />
                <span className={g === 'Miscellaneous' ? 'bg-[#d4d0c8] px-0.5 text-[12px] font-bold leading-[14px]' : 'px-0.5 leading-[14px]'}>{g}</span>
              </li>
            ))}
          </ul>
          <div className={`min-w-0 flex-1 overflow-hidden ${SUNKEN} border-l-black border-t-black`}>
            <table className="w-full table-fixed border-collapse">
              <thead>
                <tr className="h-[15px] bg-[#d4d0c8]">
                  {HEADERS.map((h) => (
                    <th key={h.label} className={`border-b border-l border-b-[#808080] border-l-white border-r border-r-[#808080] p-0 pt-0.5 font-normal leading-3 ${h.className}`}>
                      {h.label}
                    </th>
                  ))}
                </tr>
              </thead>
              <tbody>
                {ATTRIBUTES.map((a) => (
                  <tr key={a.name} className="h-4 leading-4">
                    <td className={`py-0 pl-px ${a.bold ? 'text-[12px] font-bold' : ''} ${a.selected ? 'bg-[#0a246a] text-white' : ''}`}>{a.name}</td>
                    <td className={`whitespace-nowrap p-0 ${a.cjk ? 'text-[12px]' : 'text-[10px]'}`}>
                      {a.value || <input type="checkbox" aria-label={a.name} className="ml-[3px] block h-[11px] w-[11px] appearance-none border border-black bg-white" />}
                    </td>
                    <td className="py-0 pl-0.5">{a.icon && <Icon name={a.icon} className="size-4" />}</td>
                    <td className="p-0" />
                    <td className="py-0 pl-[3px]">
                      {a.check && <input type="checkbox" aria-label={`${a.name} indirect`} className="block h-[13px] w-[13px] appearance-none border border-[#1c5180] bg-gradient-to-br from-[#dcdcd7] to-white" />}
                    </td>
                    <td className="p-0" />
                  </tr>
                ))}
              </tbody>
            </table>
          </div>
        </div>
      </div>
    </div>
  </section>
);

/* ---------- controls tree ---------- */

const CONTROLS = [
  ['clock', 'WinCC Digital/Analog Clock Control'],
  ['gauge', 'WinCC Gauge Control'],
  ['slider', 'WinCC Slider Control'],
  ['alarm', 'WinCC AlarmControl'],
  ['trend', 'WinCC OnlineTrendControl'],
  ['ftrend', 'WinCC FunctionTrendControl'],
  ['table', 'WinCC OnlineTableControl'],
  ['archive', 'WinCC UserArchiveControl'],
  ['ruler', 'WinCC RulerControl'],
  ['userAdmin', 'WinCC UserAdminControl'],
  ['media', 'WinCC Media Control'],
  ['globe', 'WinCC WebBrowser Control'],
  ['sysdiag', 'WinCC SysDiagControl'],
  ['bars', 'WinCC BarChartControl'],
  ['symbol', 'Siemens HMI Symbol Library 1.4.1'],
];

const RootItem = ({ icon, label, last, selected, open }: { icon: string; label: string; last?: boolean; selected?: boolean; open?: boolean }) => (
  <div className="relative flex h-[18px] items-center pl-[11px]">
    <Branch last={last} className="w-[11px]" />
    {open && (
      <button aria-label="Collapse" className="absolute left-[7px] top-[5px] flex size-[9px] items-center justify-center border border-[#808080] bg-white">
        <span className="h-px w-[5px] bg-black" />
      </button>
    )}
    <Icon name={icon} />
    <span className={`ml-0.5 px-0.5 leading-[18px] ${selected ? 'bg-[#d4d0c8]' : ''}`}>{label}</span>
  </div>
);

const ControlsPane = () => (
  <aside className="flex w-[359px] shrink-0 flex-col">
    <header className="flex h-[19px] shrink-0 items-center justify-between border border-[#808080] bg-[#aeaab6] pl-1 pr-1.5 pt-px text-white">
      <h2>Controls</h2>
      <PaneButtons />
    </header>
    <div className="mt-0.5 flex min-h-0 flex-1 flex-col border border-[#808080] bg-[#e6e4ee] px-[3px] pb-px pt-[3px]">
      <ul role="tree" aria-label="Controls" className={`flex-1 border border-[#808080] bg-white ${MONO} text-[10px]`}>
        <li role="treeitem"><RootItem icon="cursor" label="Selection" selected /></li>
        <li role="treeitem">
          <RootItem icon="ocx" label="ActiveX controls" open />
          <ul role="group">
            {CONTROLS.map(([icon, label], i) => (
              <li key={label} role="treeitem" className="flex h-[18px] items-center pl-[11px]">
                <span className="w-[19px] self-stretch border-l border-dotted border-[#808080]" />
                <Branch last={i === CONTROLS.length - 1} className="w-[11px]" />
                <Icon name={icon} />
                <span className="ml-1">{label}</span>
              </li>
            ))}
          </ul>
        </li>
        <li role="treeitem"><RootItem icon="net" label=".NET controls" /></li>
        <li role="treeitem"><RootItem icon="wpf" label="WPF Controls" last /></li>
      </ul>
    </div>
  </aside>
);

/* ---------- dialog ---------- */

const LEVELS = ['User administration', 'Authorization for area', 'System change', 'Monitoring', 'Process controlling', 'Higher process controlling', 'Report system', 'Archive controlling', 'Activate remote', 'Configure remote', 'Web Access - monitoring only'];

const AuthorizationsDialog = () => (
  <div role="dialog" aria-labelledby="auth-title" className="absolute left-[778px] top-[438px] flex w-[378px] flex-col border border-b-2 border-r-2 border-[#d4d0c8] border-b-[#404040] border-r-[#404040] bg-[#d4d0c8] pb-[18px]">
    <div className="flex flex-col border-l border-t border-white p-px">
      <header className="flex h-[18px] items-center justify-between bg-gradient-to-r from-[#0a246a] to-[#a6caf0] pl-0.5 pr-0.5">
        <h2 id="auth-title" className={`${MONO} pt-px text-[12px] font-bold text-white`}>Authorizations</h2>
        <button aria-label="Close" className={`flex h-3.5 w-4 items-center justify-center ${RAISED}`}><Cross /></button>
      </header>
    </div>
    <div className="flex justify-between pl-[22px] pr-2 pt-[10px]">
      <div className="flex w-[249px] flex-col gap-[5px]">
        <input aria-label="Authorization" defaultValue="User administration" className={`h-[21px] w-full px-px outline-none ${SUNKEN}`} />
        <ul role="listbox" aria-label="Authorizations" className={`h-[218px] leading-[13px] ${SUNKEN}`}>
          <li role="option" aria-selected="false" className="px-0.5">&lt;No access protection&gt;</li>
          {LEVELS.map((l, i) => (
            <li key={l} role="option" aria-selected={i === 0} className={i === 0 ? 'bg-[#0a246a] px-px text-white' : 'px-px'}>{l}</li>
          ))}
        </ul>
      </div>
      <div className="flex w-[75px] flex-col gap-1">
        <button className="h-[23px] border border-black">
          <span className={`flex h-full items-center justify-center border-b-2 border-r-2 border-b-[#808080] border-r-[#808080] ${RAISED}`}>OK</span>
        </button>
        <button className={`h-[23px] ${RAISED}`}>Cancel</button>
      </div>
    </div>
  </div>
);

/* ---------- bottom bars ---------- */

const DockTab = ({ icon, label, on }: { icon: string; label: string; on?: boolean }) => (
  <button
    role="tab"
    aria-selected={!!on}
    className={`flex h-[22px] items-center gap-[3px] ${on ? 'rounded-b border border-t-0 border-[#808080] bg-white px-1' : 'px-1.5 text-[#4c4a52]'}`}
  >
    <Icon name={icon} />
    {label}
  </button>
);

const Cell = ({ className, children }: { className: string; children: React.ReactNode }) => (
  <span className={`flex h-5 items-center border border-[#808080] px-0.5 pt-px ${className}`}>{children}</span>
);

const App = () => (
  <div className={`relative flex h-screen flex-col overflow-hidden bg-gradient-to-r from-[#cac6d4] via-[#e3e1e9] to-white text-[11px] text-black ${UI}`}>
    {/* title bar */}
    <header className="relative flex h-[19px] shrink-0 items-center justify-between border-b border-[#d4d0c8] bg-gradient-to-r from-[#808080] to-[#c4c4c4] pl-0.5 pr-0.5 pt-0.5">
      <span className="absolute left-36 right-36 top-0 h-0.5 bg-white" />
      <h1 className={`flex items-center gap-0.5 text-[12px] font-bold text-[#d4d0c8] ${MONO}`}>
        <Icon name="logo" />
        Graphics Designer - @Buttons11.PDL
      </h1>
      <div className="flex">
        <button aria-label="Minimize" className={`flex h-3.5 w-4 items-end pb-0.5 pl-[3px] ${RAISED}`}><span className="h-0.5 w-1.5 bg-black" /></button>
        <button aria-label="Restore" className={`flex h-3.5 w-4 items-center justify-center ${RAISED}`}>
          <svg viewBox="0 0 9 9" className="size-[9px]" fill="none" stroke="#000" aria-hidden="true">
            <path d="M2.500 3V0.500h6v5H6M2 1h7M0.500 3.500h5v5h-5zM0 4h6" />
          </svg>
        </button>
        <button aria-label="Close" className={`ml-0.5 flex h-3.5 w-4 items-center justify-center ${RAISED}`}><Cross /></button>
      </div>
    </header>

    <nav className="flex h-[22px] shrink-0 items-center gap-[17px] pl-4" aria-label="Menu">
      {['File', 'Edit', 'View', 'Arrange', 'Tools', 'Window', 'Help'].map((m) => <button key={m}>{m}</button>)}
    </nav>

    {/* toolbars */}
    <div className="flex h-[26px] shrink-0">
      <Toolbar label="Standard" className="w-[471px]">
        <Grip />
        <span className="w-[3px]" />
        {['newDoc', 'newT', 'open', 'save'].map((n) => <Tool key={n} name={n} />)}
        <Sep />
        <Tool name="play" />
        <Sep />
        {['cut', 'copy', 'paste'].map((n) => <Tool key={n} name={n} />)}
        <Sep />
        {['undo', 'redo'].map((n) => <Tool key={n} name={n} />)}
        <Sep />
        <Tool name="print" />
        <Sep />
        <Tool name="grid" />
        <Tool name="snap" on />
        <Sep />
        {['listDoc', 'docFolder', 'lib'].map((n) => <Tool key={n} name={n} on />)}
        <Sep />
        <Tool name="wizardBox" />
        <Sep />
        <Tool name="help" />
      </Toolbar>
      <Toolbar label="Zoom" className="ml-[109px] w-[137px]">
        <Grip />
        <span className="w-[3px]" />
        {['zoomIn', 'zoomOut', 'zoomArea'].map((n) => <Tool key={n} name={n} />)}
        <Combo label="Zoom" value="100%" className="ml-[3px] w-[54px]" />
      </Toolbar>
      <Toolbar label="Font" className="ml-[19px] w-[474px]">
        <Grip />
        <Combo label="Font" value="Arial" className="ml-[7px] w-[281px]" />
        <Combo label="Font size" value="10" className="ml-1.5 w-16" />
        <span className="w-1.5" />
        {['pen', 'fill', 'fontColor'].map((n) => (
          <React.Fragment key={n}>
            <Tool name={n} />
            <button aria-label={`${n} menu`} className="flex w-[13px] justify-center"><Caret /></button>
          </React.Fragment>
        ))}
      </Toolbar>
    </div>
    <div className="flex h-[26px] shrink-0">
      <Toolbar label="Object" className="w-[425px]">
        <Grip />
        <Combo label="Object" value="@BtnLogon" bold className="ml-[7px] w-[193px]" />
        <span className="w-1" />
        {['front', 'back', 'forward', 'backward'].map((n) => <Tool key={n} name={n} />)}
        <Sep />
        {['dropper', 'dropperOff'].map((n) => <Tool key={n} name={n} />)}
        <Sep />
        {['flipH', 'flipV', 'rotate'].map((n) => <Tool key={n} name={n} />)}
      </Toolbar>
      <Toolbar label="Align" className="ml-[55px] w-[253px]">
        <Grip />
        <span className="w-1" />
        {ALIGN.map((n) => (
          <button key={n} aria-label={n} className="flex w-[22px] shrink-0 justify-center"><AlignIcon name={n} /></button>
        ))}
      </Toolbar>
      <Toolbar label="Colors" className="ml-[68px] w-[384px]">
        <Grip />
        <span className="w-[6px]" />
        <div className="flex gap-1.5">
          {SWATCHES.map((c) => (
            <button key={c} aria-label={c} className="size-4 border border-[#909090] bg-white p-px">
              <span className="block h-full" style={{ backgroundColor: c }} />
            </button>
          ))}
          <button aria-label="More colors" className="size-4 border border-[#909090] bg-white p-px">
            <span className="block h-full bg-[linear-gradient(to_right,#f04040,#e0e020,#20c040,#20a0e0,#4040e0,#e040e0)]" />
          </button>
        </div>
      </Toolbar>
    </div>

    <main className="flex min-h-0 flex-1 gap-[5px]">
      <div className="flex min-w-0 flex-1 flex-col">
        <DocumentPane />
        <PropertiesPane />
      </div>
      <ControlsPane />
    </main>

    <div className="flex h-[23px] shrink-0 gap-[5px]">
      <div className="flex min-w-0 flex-1 gap-px pl-0.5" role="tablist">
        <DockTab icon="listDoc" label="Object Properties" on />
        <DockTab icon="tags" label="Tags" />
        <DockTab icon="output" label="Output Window" />
        <DockTab icon="docFolder" label="Library" />
        <DockTab icon="docFolder" label="SVG library" />
        <DockTab icon="wand" label="Dynamic Wizard" />
      </div>
      <div className="flex w-[359px] shrink-0" role="tablist">
        <DockTab icon="std" label="Standard" />
        <DockTab icon="ctrlTab" label="Controls" on />
        <DockTab icon="styles" label="Styles" />
        <DockTab icon="logo" label="Process Pictures" />
      </div>
    </div>

    <Toolbar label="Layers" className="w-[593px]">
      <Grip />
      <div className="ml-1 flex border-r border-[#0a246a]">
        {Array.from({ length: 16 }, (_, i) => (
          <button key={i} className="h-[21px] w-[22px] border border-[#0a246a] bg-[#cfd2e0] text-center">{i}</button>
        ))}
      </div>
      <button aria-label="Active layer" className="ml-0.5"><Icon name="arrowGo" /></button>
      <Sep wide />
      <Combo label="Layer" value="0 - Layer0" className="w-[194px] pl-1.5" />
    </Toolbar>

    <footer className="flex h-[25px] shrink-0 items-center justify-between border-b-2 border-[#404040] pl-1 pt-0.5">
      <span className="pt-px">Press F1 for Help.</span>
      <div className="flex gap-0.5">
        <Cell className="w-[124px]">英语(美国)</Cell>
        <Cell className="w-[119px]">@BtnLogon</Cell>
        <Cell className="w-[200px] gap-1"><Icon name="pos" />X:175 Y:5</Cell>
        <Cell className="w-[200px] gap-1"><Icon name="size" />X:49 Y:49</Cell>
        <Cell className="w-[30px] justify-center text-[#9a9a9e]">CAPS</Cell>
        <Cell className="w-[30px] justify-center">NUM</Cell>
        <Cell className="w-[29px] justify-center text-[#9a9a9e]">SCRL</Cell>
      </div>
    </footer>

    {/* runtime picture showing below the editor window */}
    <div className="relative flex h-6 shrink-0 flex-col justify-end overflow-hidden bg-[#c0c0c0] pb-0.5">
      <div className="relative h-[57px] shrink-0">
        {BOTTOM_OBJECTS.map((o) => <CanvasButton key={o.x} {...o} />)}
      </div>
    </div>

    <AuthorizationsDialog />
  </div>
);

export default App;
